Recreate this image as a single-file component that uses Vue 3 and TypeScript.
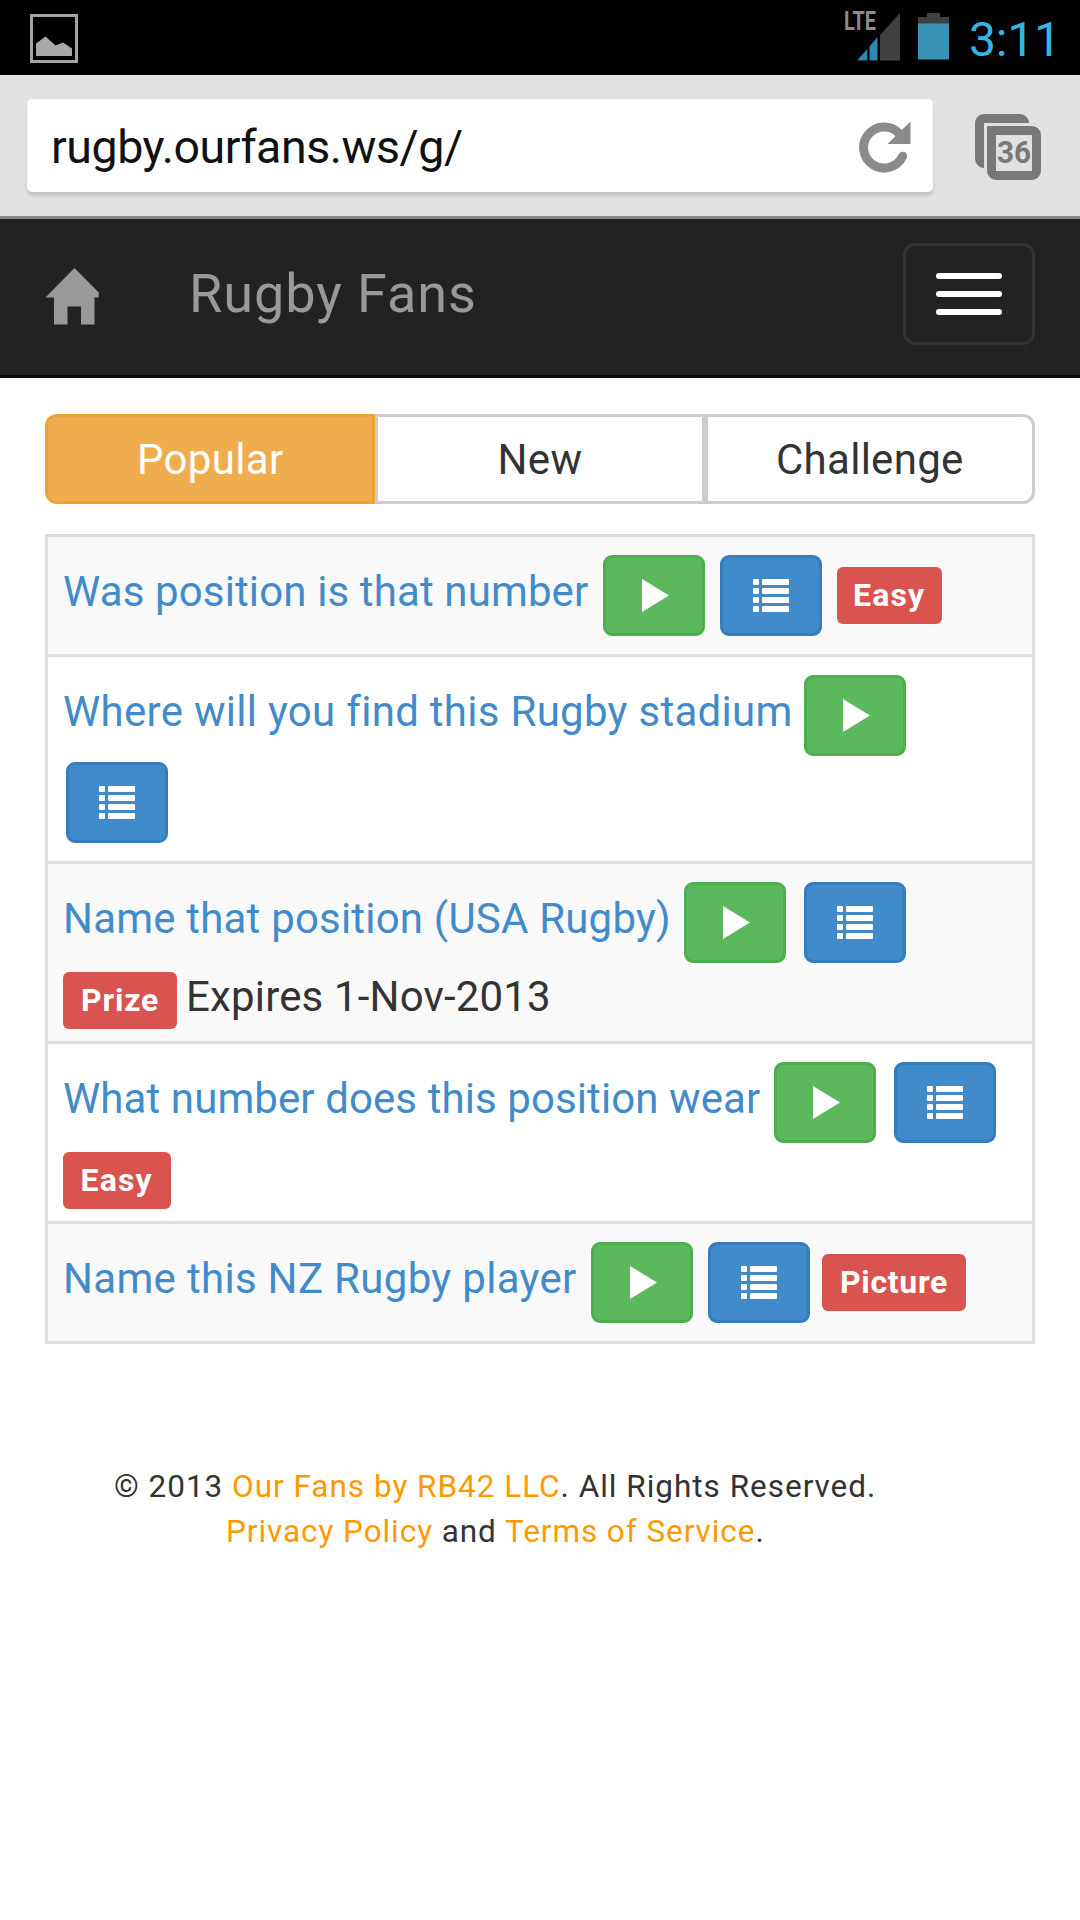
<script setup lang="ts">
interface Item {
  kind: 'title' | 'play' | 'list' | 'label' | 'text'
  text?: string
  fit?: number
  width?: number
  gap?: number
}

interface Row {
  first: Item[]
  second?: Item[]
}

const rows: Row[] = [
  {
    first: [
      { kind: 'title', text: 'Was position is that number', fit: 524, gap: 1 },
      { kind: 'play', gap: 15 },
      { kind: 'list', gap: 15 },
      { kind: 'label', text: 'Easy', fit: 70, width: 105, gap: 15 },
    ],
  },
  {
    first: [
      { kind: 'title', text: 'Where will you find this Rugby stadium', fit: 724, gap: 1 },
      { kind: 'play', gap: 16 },
    ],
    second: [{ kind: 'list', gap: 3 }],
  },
  {
    first: [
      { kind: 'title', text: 'Name that position (USA Rugby)', fit: 602, gap: 3 },
      { kind: 'play', gap: 16 },
      { kind: 'list', gap: 18 },
    ],
    second: [
      { kind: 'label', text: 'Prize', fit: 75, width: 114, gap: 0 },
      { kind: 'text', text: 'Expires 1-Nov-2013', fit: 359, gap: 12 },
    ],
  },
  {
    first: [
      { kind: 'title', text: 'What number does this position wear', fit: 696, gap: 1 },
      { kind: 'play', gap: 14 },
      { kind: 'list', gap: 18 },
    ],
    second: [{ kind: 'label', text: 'Easy', fit: 70, width: 108, gap: 0 }],
  },
  {
    first: [
      { kind: 'title', text: 'Name this NZ Rugby player', fit: 510, gap: 3 },
      { kind: 'play', gap: 15 },
      { kind: 'list', gap: 15 },
      { kind: 'label', text: 'Picture', fit: 105, width: 144, gap: 12 },
    ],
  },
]

const tabs = [
  { text: 'Popular', fit: 143, active: true },
  { text: 'New', fit: 81, active: false },
  { text: 'Challenge', fit: 184, active: false },
]

// Tracks a line of text so that its visible glyphs span exactly the given width.
const vFit = {
  mounted(el: HTMLElement, binding: { value: number }) {
    const ctx = document.createElement('canvas').getContext('2d')
    const text = (el.textContent ?? '').replace(/\s+/g, ' ').trim()
    if (!ctx || text.length < 2) return
    const cs = getComputedStyle(el)
    ctx.font = `${cs.fontWeight} ${cs.fontSize} ${cs.fontFamily}`
    const m = ctx.measureText(text)
    const ink = m.actualBoundingBoxLeft + m.actualBoundingBoxRight
    el.style.width = `${binding.value}px`
    el.style.textIndent = `${m.actualBoundingBoxLeft}px`
    el.style.letterSpacing = `${(binding.value - ink) / (text.length - 1)}px`
  },
}
</script>

<template>
  <div class="screen">
    <div class="status">
      <svg class="shot" width="48" height="49" viewBox="0 0 48 49">
        <rect x="1.5" y="1.5" width="45" height="46" fill="none" stroke="#a3a3a3" stroke-width="3" />
        <path d="M6 42V29.5L15.5 22.5L25.5 31.5L33 28.5L42 34.5V42Z" fill="#a8a8a8" />
      </svg>
      <svg class="signal" width="60" height="53" viewBox="0 0 60 53">
        <path d="M55 5V52.500H35V27Z" fill="#404040" />
        <path d="M12 52.500L22.300 41V52.500Z" fill="#2a8ab2" />
        <path d="M24.500 38.500L32.500 29V52.500H24.500Z" fill="#2a8ab2" />
        <text x="-1" y="22" textLength="32" lengthAdjust="spacingAndGlyphs">LTE</text>
      </svg>
      <svg class="battery" width="31" height="47" viewBox="0 0 31 47">
        <path d="M0 4H9V0H22V4H31V12H0Z" fill="#404040" />
        <rect y="10.500" width="31" height="36" fill="#3993b5" />
      </svg>
      <span v-fit="81" class="clock">3:11</span>
    </div>

    <div class="toolbar">
      <div class="omnibox">
        <span v-fit="408" class="url">rugby.ourfans.ws/g/</span>
        <svg class="reload" width="54" height="54" viewBox="0 0 54 54">
          <path d="M44.700 36.200A20.500 20.500 0 1 1 41.500 14" fill="none" stroke="#8b8b8b" stroke-width="9" stroke-linecap="round" />
          <path d="M52.500 1.500V24H29.500Z" fill="#8b8b8b" />
        </svg>
      </div>
      <svg class="pages" width="66" height="66" viewBox="0 0 66 66">
        <path d="M9 54A9 9 0 0 1 0 45V9A9 9 0 0 1 9 0H45A9 9 0 0 1 54 9H9Z" fill="#787878" />
        <rect x="16.500" y="16.500" width="45" height="45" rx="4.500" fill="#e1e1e1" stroke="#787878" stroke-width="9" />
        <rect x="12" y="12" width="9" height="9" rx="1" fill="#787878" />
        <text x="22" y="49" textLength="34" lengthAdjust="spacingAndGlyphs">36</text>
      </svg>
    </div>

    <nav class="navbar">
      <svg class="home" width="54" height="57" viewBox="0 0 54 57">
        <path d="M0.500 29.500L29.500 0L53.800 24.500V29.500H49.500V56.500H36V38.500H22.500V56.500H9V29.500Z" fill="#999" />
      </svg>
      <span v-fit="281" class="brand">Rugby Fans</span>
      <button class="toggle" type="button" aria-label="Menu"><i></i><i></i><i></i></button>
    </nav>

    <main>
      <div class="tabs">
        <div v-for="tab in tabs" :key="tab.text" class="tab" :class="{ active: tab.active }">
          <span v-fit="tab.fit" class="tab-text">{{ tab.text }}</span>
        </div>
      </div>

      <div class="table">
        <div v-for="(row, r) in rows" :key="r" class="row">
          <template v-for="(line, l) in [row.first, row.second]" :key="l">
            <div v-if="line" class="line" :class="{ second: l === 1, buttons: line[0].kind === 'list' }">
              <template v-for="(item, i) in line" :key="i">
                <a v-if="item.kind === 'title'" v-fit="item.fit!" class="title" :style="{ marginLeft: item.gap + 'px' }">{{ item.text }}</a>
                <span v-else-if="item.kind === 'text'" v-fit="item.fit!" class="plain" :style="{ marginLeft: item.gap + 'px' }">{{ item.text }}</span>
                <span v-else-if="item.kind === 'label'" class="label" :style="{ marginLeft: item.gap + 'px', width: item.width + 'px' }">
                  <span v-fit="item.fit!" class="label-text">{{ item.text }}</span>
                </span>
                <a v-else class="btn" :class="item.kind" :style="{ marginLeft: item.gap + 'px' }">
                  <svg v-if="item.kind === 'play'" width="36" height="33" viewBox="0 0 36 33">
                    <path d="M6 0L33 16.500L6 33Z" fill="#fff" />
                  </svg>
                  <svg v-else width="36" height="33" viewBox="0 0 36 33" fill="#fff">
                    <template v-for="n in 4" :key="n">
                      <rect x="0" :y="(n - 1) * 9" width="6" height="6" rx="1" />
                      <rect x="9" :y="(n - 1) * 9" width="27" height="6" rx="1" />
                    </template>
                  </svg>
                </a>
              </template>
            </div>
          </template>
        </div>
      </div>

      <footer>
        <p v-fit="758">© 2013 <a>Our Fans by RB42 LLC</a>. All Rights Reserved.</p>
        <p v-fit="534"><a>Privacy Policy</a> and <a>Terms of Service</a>.</p>
      </footer>
    </main>
  </div>
</template>

<style>
body {
  margin: 0;
  background: #fff;
}
</style>

<style scoped>
.screen {
  width: 1080px;
  height: 1920px;
  overflow: hidden;
  background: #fff;
  color: #333;
  font-family: Roboto, "Liberation Sans", sans-serif;
  font-size: 42px;
}
.screen * {
  box-sizing: border-box;
}
svg {
  display: block;
  flex: none;
}
.status {
  display: flex;
  align-items: flex-start;
  height: 75px;
  padding: 0 28px 0 30px;
  background: #000;
}
.shot {
  margin-top: 14px;
}
.signal {
  margin: 8px 0 0 767px;
  overflow: visible;
}
.signal text {
  font: 700 25px Roboto, sans-serif;
  fill: #8c8c8c;
}
.battery {
  margin: 13px 0 0 13px;
}
.clock,
.url,
.brand,
.title,
.plain,
.tab-text,
.label-text {
  display: block;
  flex: none;
  white-space: nowrap;
}
.clock {
  margin-left: 22px;
  color: #33b5e5;
  font-size: 48px;
  line-height: 79px;
}
.toolbar {
  display: flex;
  align-items: flex-start;
  height: 144px;
  padding: 24px 39px 0 27px;
  border-bottom: 3px solid #868686;
  background: #e1e1e1;
}
.omnibox {
  display: flex;
  align-items: flex-start;
  width: 906px;
  height: 93px;
  padding-left: 27px;
  border-radius: 5px;
  background: #fff;
  box-shadow: 0 4px 3px rgba(0, 0, 0, 0.12);
}
.url {
  color: #111;
  font-size: 46.5px;
  line-height: 97px;
}
.reload {
  margin: 21px 0 0 396px;
}
.pages {
  margin: 15px 0 0 42px;
}
.pages text {
  font: 700 31px Roboto, sans-serif;
  fill: #787878;
}
.navbar {
  display: flex;
  align-items: flex-start;
  height: 159px;
  padding: 0 45px;
  border-bottom: 3px solid #080808;
  background: #222;
}
.home {
  margin-top: 49px;
}
.brand {
  margin-left: 94px;
  color: #999;
  font-size: 54px;
  line-height: 149px;
}
.toggle {
  display: flex;
  flex-direction: column;
  align-items: center;
  justify-content: center;
  gap: 12px;
  width: 132px;
  height: 102px;
  margin: 24px 0 0 auto;
  padding: 0;
  border: 3px solid #333;
  border-radius: 12px;
  background: transparent;
}
.toggle i {
  width: 66px;
  height: 6px;
  border-radius: 3px;
  background: #fff;
}
main {
  padding: 36px 45px 0;
}
.tabs {
  display: grid;
  grid-template-columns: repeat(3, 330px);
  height: 90px;
}
.tab {
  display: flex;
  justify-content: center;
  height: 90px;
  padding-left: 2px;
  border: 3px solid #ccc;
  line-height: 85px;
}
.tab:first-child {
  padding-left: 3px;
  border-radius: 12px 0 0 12px;
}
.tab:last-child {
  padding-left: 0;
  border-radius: 0 12px 12px 0;
}
.tab.active {
  border-color: #eea236;
  background: #f0ad4e;
  color: #fff;
}
.table {
  margin-top: 30px;
  border: 3px solid #ddd;
  border-bottom: 0;
}
.row {
  padding: 18px 15px;
  border-bottom: 3px solid #ddd;
}
.row:nth-child(odd) {
  background: #f9f9f9;
}
.row:has(.second:not(.buttons)) {
  padding-bottom: 12px;
}
.line {
  display: flex;
  align-items: flex-start;
  height: 81px;
}
.line.second {
  height: 57px;
  margin-top: 9px;
}
.line.second.buttons {
  height: 81px;
  margin-top: 6px;
}
.title {
  color: #428bca;
  line-height: 73px;
}
.plain {
  line-height: 49px;
}
.btn {
  display: flex;
  flex: none;
  align-items: center;
  justify-content: center;
  width: 102px;
  height: 81px;
  border: 3px solid;
  border-radius: 9px;
}
.btn.play {
  border-color: #4cae4c;
  background: #5cb85c;
}
.btn.list {
  border-color: #357ebd;
  background: #428bca;
}
.label {
  display: flex;
  flex: none;
  justify-content: center;
  height: 57px;
  margin-top: 12px;
  padding-left: 1px;
  border-radius: 6px;
  background: #d9534f;
  color: #fff;
  font-size: 32px;
  font-weight: 700;
  line-height: 57px;
}
.second .label {
  margin-top: 0;
}
footer {
  display: flex;
  flex-direction: column;
  align-items: center;
  width: 900px;
  margin-top: 120px;
  font-size: 31.5px;
  line-height: 45px;
}
footer p {
  margin: 0;
  white-space: nowrap;
}
footer p:first-child {
  margin-left: -2px;
}
footer a {
  color: #f90;
}
</style>
